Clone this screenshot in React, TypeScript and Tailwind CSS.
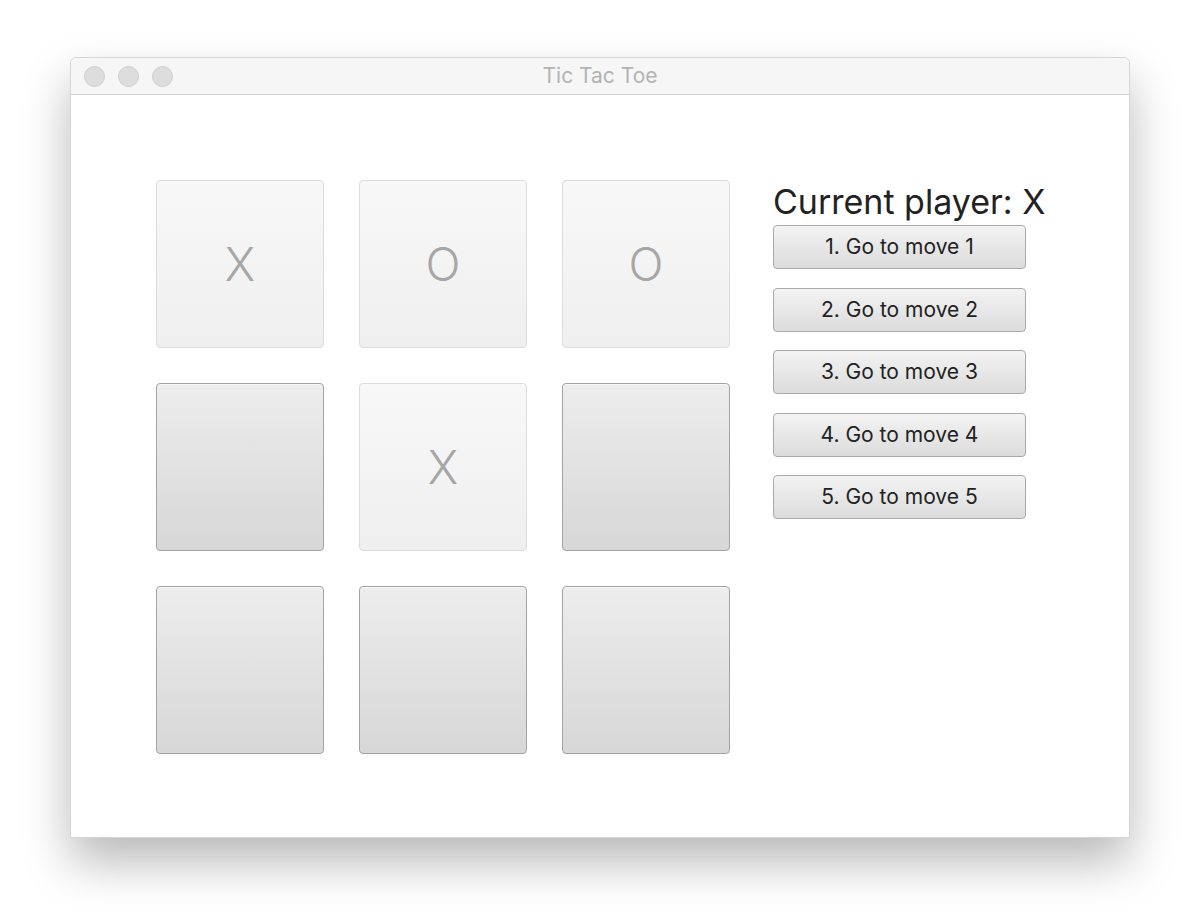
import React from 'react'

type Mark = 'X' | 'O' | null

const BOARD: Mark[] = ['X', 'O', 'O', null, 'X', null, null, null, null]
const MOVES = [1, 2, 3, 4, 5]

function Square({ value }: { value: Mark }) {
  if (value) {
    return (
      <div className="w-[168px] h-[168px] flex items-center justify-center rounded-[4px] border border-[#dcdcdc] bg-gradient-to-b from-[#f8f8f8] to-[#efefef] text-[46px] font-light text-[#a6a6a6] leading-none">
        {value}
      </div>
    )
  }
  return (
    <div className="w-[168px] h-[168px] rounded-[4px] border border-[#a3a3a3] bg-gradient-to-b from-[#ededed] to-[#d7d7d7] shadow-[inset_0_1px_0_#f7f7f7]" />
  )
}

export default function App() {
  return (
    <div
      className="w-[1200px] h-[923px] bg-white pl-[70px] pt-[57px]"
      style={{ fontFamily: 'Inter, "Liberation Sans", Arial, sans-serif' }}
    >
      <div className="w-[1060px] h-[781px] flex flex-col bg-white rounded-t-[6px] border border-[#d6d6d6] shadow-[0_24px_48px_rgba(0,0,0,0.28)]">
        {/* title bar */}
        <div className="relative h-[37px] flex-none flex items-center bg-[#f6f6f6] border-b border-[#d2d2d2] rounded-t-[6px]">
          <div className="flex gap-[13px] pl-[13px]">
            <span className="w-[21px] h-[21px] rounded-full bg-[#dddddd] border border-[#cfcfcf]" />
            <span className="w-[21px] h-[21px] rounded-full bg-[#dddddd] border border-[#cfcfcf]" />
            <span className="w-[21px] h-[21px] rounded-full bg-[#dddddd] border border-[#cfcfcf]" />
          </div>
          <div className="absolute inset-0 flex items-center justify-center text-[21px] text-[#b3b3b3]">
            Tic Tac Toe
          </div>
        </div>

        {/* content */}
        <div className="flex pl-[85px] pt-[85px] gap-[43px]">
          <div className="grid grid-cols-[168px_168px_168px] gap-[35px]">
            {BOARD.map((v, i) => (
              <Square key={i} value={v} />
            ))}
          </div>

          <div className="flex flex-col pt-[2px]">
            <div className="text-[34px] leading-[40px] text-[#222222] mb-[3px]">Current player: X</div>
            <div className="flex flex-col gap-[18.5px]">
              {MOVES.map((m) => (
                <button
                  key={m}
                  className="w-[253px] h-[44px] rounded-[4px] border border-[#a9a9a9] bg-gradient-to-b from-[#f3f3f3] to-[#dcdcdc] text-[21px] text-[#222222]"
                >
                  {m}. Go to move {m}
                </button>
              ))}
            </div>
          </div>
        </div>
      </div>
    </div>
  )
}
